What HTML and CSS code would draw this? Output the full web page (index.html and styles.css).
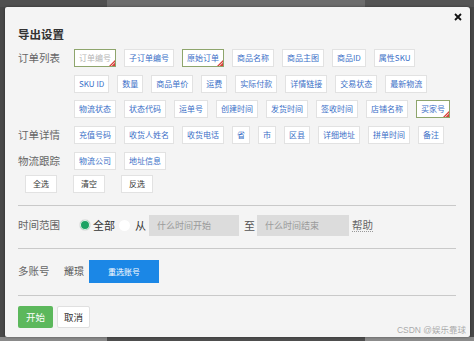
FILE: index.html
```html
<!DOCTYPE html>
<html lang="zh-CN">
<head>
<meta charset="utf-8">
<title>导出设置</title>
<link rel="stylesheet" href="styles.css">
</head>
<body>
<div class="dialog">
  <button class="close" aria-label="关闭">
    <svg width="8" height="8" viewBox="0 0 8 8"><path d="M1 1 L7 7 M7 1 L1 7" stroke="#111" stroke-width="1.8" fill="none"/></svg>
  </button>
  <h1 class="title">导出设置</h1>

  <div class="fields">
    <div class="field">
      <span class="field-label">订单列表</span>
      <div class="tags">
        <span class="tag is-selected is-muted">订单编号<svg class="mark" width="6" height="6" viewBox="0 0 6 6"><polygon points="6,0 6,6 0,6" fill="#d8413a"/><path d="M2.2 6 L6 2.2" stroke="#fff" stroke-width="0.8"/></svg></span>
        <span class="tag">子订单编号</span>
        <span class="tag is-selected">原始订单<svg class="mark" width="6" height="6" viewBox="0 0 6 6"><polygon points="6,0 6,6 0,6" fill="#d8413a"/><path d="M2.2 6 L6 2.2" stroke="#fff" stroke-width="0.8"/></svg></span>
        <span class="tag">商品名称</span>
        <span class="tag">商品主图</span>
        <span class="tag">商品ID</span>
        <span class="tag">属性SKU</span>
        <span class="tag">SKU ID</span>
        <span class="tag">数量</span>
        <span class="tag">商品单价</span>
        <span class="tag">运费</span>
        <span class="tag">实际付款</span>
        <span class="tag">详情链接</span>
        <span class="tag">交易状态</span>
        <span class="tag">最新物流</span>
        <span class="tag">物流状态</span>
        <span class="tag">状态代码</span>
        <span class="tag">运单号</span>
        <span class="tag">创建时间</span>
        <span class="tag">发货时间</span>
        <span class="tag">签收时间</span>
        <span class="tag">店铺名称</span>
        <span class="tag is-selected">买家号<svg class="mark" width="6" height="6" viewBox="0 0 6 6"><polygon points="6,0 6,6 0,6" fill="#d8413a"/><path d="M2.2 6 L6 2.2" stroke="#fff" stroke-width="0.8"/></svg></span>
      </div>
    </div>
    <div class="field">
      <span class="field-label">订单详情</span>
      <div class="tags">
        <span class="tag">充值号码</span>
        <span class="tag">收货人姓名</span>
        <span class="tag">收货电话</span>
        <span class="tag">省</span>
        <span class="tag">市</span>
        <span class="tag">区县</span>
        <span class="tag">详细地址</span>
        <span class="tag">拼单时间</span>
        <span class="tag">备注</span>
      </div>
    </div>
    <div class="field">
      <span class="field-label">物流跟踪</span>
      <div class="tags">
        <span class="tag">物流公司</span>
        <span class="tag">地址信息</span>
      </div>
    </div>
  </div>

  <div class="bulk-actions">
    <button class="btn-small">全选</button>
    <button class="btn-small">清空</button>
    <button class="btn-small">反选</button>
  </div>

  <hr class="divider">

  <div class="time-row">
    <span class="row-label time-label">时间范围</span>
    <span class="radio is-checked"></span>
    <span class="radio-text">全部</span>
    <span class="radio"></span>
    <span class="radio-text from">从</span>
    <input class="time-input start" type="text" placeholder="什么时间开始">
    <span class="radio-text to">至</span>
    <input class="time-input end" type="text" placeholder="什么时间结束">
    <span class="help">帮助</span>
  </div>

  <hr class="divider">

  <div class="account-row">
    <span class="row-label account-label">多账号</span>
    <span class="account-name">耀璟</span>
    <button class="btn-blue">重选账号</button>
  </div>

  <hr class="divider">

  <div class="footer">
    <button class="btn-start">开始</button>
    <button class="btn-cancel">取消</button>
  </div>

  <span class="watermark">CSDN @娱乐靠球</span>
</div>
</body>
</html>
```

FILE: styles.css
```css
* { box-sizing: border-box; }

html, body {
  margin: 0;
  height: 341px;
  overflow: hidden;
}

body {
  font-family: "Noto Sans CJK SC", "Noto Sans", sans-serif;
  background:
    linear-gradient(to right, #505050 0 107px, #6c6c6c 107px 365px, #545454 365px) top / 100% 7px no-repeat,
    linear-gradient(to right, #8a8a8a 0 107px, #4e4e4e 107px 365px, #8c8c8c 365px) bottom / 100% 4px no-repeat,
    #484848;
  padding: 7px 0 0 5px;
}

.dialog {
  position: relative;
  width: 465px;
  height: 330px;
  background: #f4f4f4;
  border-radius: 2px 3px 2px 2px;
  box-shadow: 0 0 3px rgba(0,0,0,0.4);
  padding: 20px 0 0 13px;
}

.close {
  position: absolute;
  top: 6px;
  right: 8px;
  width: 8px;
  height: 8px;
  padding: 0;
  border: 0;
  background: none;
  display: block;
}
.close svg { display: block; }

.title {
  margin: 0 0 8px;
  font-size: 11.5px;
  line-height: 14px;
  font-weight: bold;
  color: #333;
}

.fields {
  display: flex;
  flex-direction: column;
  gap: 7.7px;
}

.field {
  display: flex;
  align-items: flex-start;
}

.field-label {
  width: 56px;
  flex: none;
  font-size: 10.5px;
  line-height: 18px;
  color: #666;
}

.tags {
  width: 378px;
  display: flex;
  flex-wrap: wrap;
  gap: 7.7px 8px;
}

.tag {
  position: relative;
  height: 18px;
  padding: 0 4px;
  border: 1px solid #e2e2e2;
  background: #fff;
  color: #3b6fc7;
  font-size: 8px;
  line-height: 16px;
  white-space: nowrap;
}

.tag.is-selected {
  border-color: #8ea56c;
}
.tag.is-muted {
  color: #b5b5b5;
}

.mark {
  position: absolute;
  right: 0;
  bottom: 0;
  display: block;
}

.bulk-actions {
  display: flex;
  gap: 16px;
  margin: 5px 0 0 7px;
}

.btn-small {
  width: 32px;
  height: 18px;
  padding: 0;
  border: 1px solid #e2e2e2;
  background: #fff;
  color: #333;
  font-family: inherit;
  font-size: 8px;
  line-height: 16px;
}

.divider {
  width: 438px;
  height: 1px;
  margin: 12px 0 0;
  border: 0;
  background: #c9c9c9;
}

.time-row {
  display: flex;
  align-items: center;
  height: 21px;
  margin-top: 9px;
}

.row-label {
  flex: none;
  font-size: 10.5px;
  color: #666;
  line-height: 14px;
}
.time-label { width: 56px; }

.radio {
  flex: none;
  width: 11px;
  height: 11px;
  border-radius: 50%;
  background: #fff;
  margin-left: 4px;
}
.radio.is-checked {
  width: 10px;
  height: 10px;
  margin-left: 6px;
  background: #1aa363;
  box-shadow: inset 0 0 0 1px #e8f3ec, 0 0 0 1px #e4e4e4;
}

.radio-text {
  font-size: 11px;
  line-height: 14px;
  color: #333;
  margin-left: 3px;
}
.radio-text.from { margin-left: 5px; }
.radio-text.to { margin-left: 5px; color: #555; }

.time-input {
  height: 21px;
  border: 0;
  background: #dcdcdc;
  padding: 0 0 0 8px;
  font-family: inherit;
  font-size: 9px;
  color: #999;
  outline: none;
}
.time-input::placeholder { color: #9a9a9a; }
.time-input.start { width: 90px; margin-left: 3px; }
.time-input.end { width: 92px; margin-left: 2px; }

.help {
  margin-left: 3px;
  font-size: 10.5px;
  line-height: 13px;
  color: #666;
  border-bottom: 1px dotted #999;
}

.account-row {
  display: flex;
  align-items: center;
  height: 23px;
  margin-top: 11px;
}
.account-label { width: 46px; }

.account-name {
  font-size: 10px;
  line-height: 14px;
  color: #555;
}

.btn-blue {
  width: 70px;
  height: 23px;
  margin-left: 5px;
  padding: 0;
  border: 0;
  background: #1b87e6;
  color: #fff;
  font-family: inherit;
  font-size: 8px;
}

.footer {
  display: flex;
  gap: 4px;
  margin-top: 10px;
}

.btn-start,
.btn-cancel {
  height: 22px;
  padding: 0;
  border-radius: 2px;
  font-family: inherit;
  font-size: 9.5px;
}
.btn-start {
  width: 35px;
  border: 0;
  background: #5cb85c;
  color: #fff;
}
.btn-cancel {
  width: 33px;
  border: 1px solid #e0e0e0;
  background: #fff;
  color: #333;
}

.watermark {
  position: absolute;
  right: 4px;
  bottom: 1px;
  font-family: "Liberation Sans", "Noto Sans CJK SC", sans-serif;
  font-size: 8.5px;
  line-height: 11px;
  color: #a8a8a8;
  text-shadow: 0 0 1px #fff;
}
```
